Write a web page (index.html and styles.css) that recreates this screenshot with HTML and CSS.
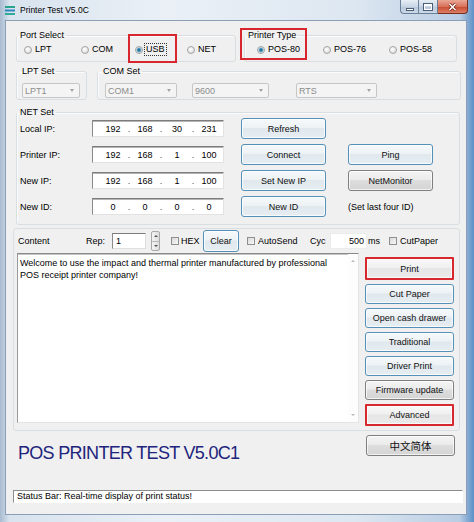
FILE: index.html
```html
<!DOCTYPE html>
<html lang="en">

<head>
    <meta charset="UTF-8">
    <meta name="viewport" content="width=device-width, initial-scale=1.0">
    <title>Printer Test V5.0C</title>
    <link rel="stylesheet" href="styles.css">
</head>

<body>
    <div class="window">
        <div class="titlebar">
            <svg class="app-icon" width="10" height="9" viewBox="0 0 10 9">
                <rect x="0" y="0" width="10" height="2" fill="#2aa38c" />
                <rect x="0" y="3.5" width="10" height="2" fill="#2b86c2" />
                <rect x="0" y="7" width="10" height="2" fill="#33a99a" />
            </svg>
            <span class="title">Printer Test V5.0C</span>
            <div class="caption-buttons">
                <span class="cap-btn cap-min"><span class="min-glyph"></span></span>
                <span class="cap-btn cap-max"><span class="max-glyph"></span></span>
                <span class="cap-btn cap-close">
                    <svg width="9" height="8" viewBox="0 0 9 8">
                        <path d="M1.5 1 L7.5 7 M7.5 1 L1.5 7" stroke="#6b1d10" stroke-width="3" />
                        <path d="M1.5 1 L7.5 7 M7.5 1 L1.5 7" stroke="#ffffff" stroke-width="1.6" />
                    </svg>
                </span>
            </div>
        </div>

        <div class="client">
            <div class="top-row">
                <fieldset class="group port-group">
                    <legend>Port Select</legend>
                    <div class="radio-row port-radios">
                        <label class="opt"><span class="radio"></span>LPT</label>
                        <label class="opt"><span class="radio"></span>COM</label>
                        <label class="opt"><span class="radio checked"></span><span class="focus">USB</span><span class="mark usb-mark"></span></label>
                        <label class="opt"><span class="radio"></span>NET</label>
                    </div>
                </fieldset>
                <fieldset class="group type-group">
                    <legend>Printer Type<span class="mark type-mark"></span></legend>
                    <div class="radio-row type-radios">
                        <label class="opt"><span class="radio checked"></span>POS-80</label>
                        <label class="opt"><span class="radio"></span>POS-76</label>
                        <label class="opt"><span class="radio"></span>POS-58</label>
                    </div>
                </fieldset>
            </div>

            <div class="set-row">
                <fieldset class="group lpt-group">
                    <legend>LPT Set</legend>
                    <div class="combo-row lpt-combos">
                        <span class="combo combo-lpt">LPT1<i class="arrow"></i></span>
                    </div>
                </fieldset>
                <fieldset class="group com-group">
                    <legend>COM Set</legend>
                    <div class="combo-row com-combos">
                        <span class="combo combo-port">COM1<i class="arrow"></i></span>
                        <span class="combo combo-baud">9600<i class="arrow"></i></span>
                        <span class="combo combo-flow">RTS<i class="arrow"></i></span>
                    </div>
                </fieldset>
            </div>

            <fieldset class="group net-group">
                <legend>NET Set</legend>
                <div class="net-grid">
                    <span>Local IP:</span>
                    <div class="ipbox"><span>192</span><i>.</i><span>168</span><i>.</i><span>30</span><i>.</i><span>231</span></div>
                    <button class="btn net-btn">Refresh</button>
                    <span></span>

                    <span>Printer IP:</span>
                    <div class="ipbox"><span>192</span><i>.</i><span>168</span><i>.</i><span>1</span><i>.</i><span>100</span></div>
                    <button class="btn net-btn">Connect</button>
                    <button class="btn net-btn">Ping</button>

                    <span>New IP:</span>
                    <div class="ipbox"><span>192</span><i>.</i><span>168</span><i>.</i><span>1</span><i>.</i><span>100</span></div>
                    <button class="btn net-btn">Set New IP</button>
                    <button class="btn gray net-btn">NetMonitor</button>

                    <span>New ID:</span>
                    <div class="ipbox"><span>0</span><i>.</i><span>0</span><i>.</i><span>0</span><i>.</i><span>0</span></div>
                    <button class="btn net-btn">New ID</button>
                    <span>(Set last four ID)</span>
                </div>
            </fieldset>

            <div class="content-group">
                <div class="content-bar">
                    <span class="content-label">Content</span>
                    <span class="rep-label">Rep:</span>
                    <span class="edit rep-edit">1</span>
                    <span class="spin"><i class="spin-up"></i><i class="spin-down"></i></span>
                    <label class="check hex-check"><span class="box"></span>HEX</label>
                    <button class="btn clear-btn">Clear</button>
                    <label class="check auto-check"><span class="box"></span>AutoSend</label>
                    <span class="cyc-label">Cyc</span>
                    <span class="edit cyc-edit">500</span>
                    <span class="ms-label">ms</span>
                    <label class="check"><span class="box"></span>CutPaper</label>
                </div>
                <div class="content-main">
                    <div class="memo">
                        <div class="memo-text">Welcome to use the impact and thermal printer manufactured by professional<br>POS receipt printer company!</div>
                        <div class="memo-scroll"><i class="scroll-up"></i><i class="scroll-down"></i></div>
                    </div>
                    <div class="side-buttons">
                        <button class="btn marked print-btn">Print</button>
                        <button class="btn">Cut Paper</button>
                        <button class="btn">Open cash drawer</button>
                        <button class="btn">Traditional</button>
                        <button class="btn">Driver Print</button>
                        <button class="btn gray">Firmware update</button>
                        <button class="btn marked advanced-btn">Advanced</button>
                    </div>
                </div>
            </div>

            <div class="bottom-row">
                <div class="big-title">POS PRINTER TEST V5.0C1</div>
                <button class="btn gray lang-btn">中文简体</button>
            </div>

            <div class="statusbar">Status Bar: Real-time display of print status!</div>
        </div>
    </div>
</body>

</html>
```

FILE: styles.css
```css
* {
    box-sizing: border-box;
}

body {
    margin: 0;
    width: 474px;
    height: 522px;
    overflow: hidden;
    font-family: 'Liberation Sans', Arial, sans-serif;
    font-size: 9px;
    color: #111;
}

.window {
    width: 474px;
    height: 522px;
    background: linear-gradient(to right, #a9bbd0 0, #d8e3ee 2%, #eaf0f6 35%, #dde7f1 75%, #b9cde3 97%, #5d90c6 100%);
}

/* title bar */

.titlebar {
    height: 20px;
    display: flex;
    align-items: center;
}

.app-icon {
    margin-left: 5px;
    margin-top: 1px;
}

.title {
    margin-left: 5px;
    font-size: 8.5px;
    color: #000;
}

.caption-buttons {
    display: flex;
    align-self: flex-start;
    margin-left: auto;
    margin-right: 6px;
}

.cap-btn {
    height: 14px;
    display: flex;
    align-items: center;
    justify-content: center;
    border: 1px solid #6a7f98;
    border-top: none;
    background: linear-gradient(#e6edf5, #c9d6e5 50%, #b6c6d9 51%, #ccd9e8);
}

.cap-min {
    width: 19px;
    border-radius: 0 0 0 4px;
}

.cap-max {
    width: 19px;
    border-left: none;
}

.cap-close {
    width: 30px;
    border-left: none;
    border-color: #7a2e22;
    border-radius: 0 0 4px 0;
    background: linear-gradient(#eaa795, #d8725c 50%, #c84a30 51%, #dc8064);
}

.min-glyph {
    width: 8px;
    height: 3px;
    margin-top: 5px;
    background: #fff;
    border: 1px solid #4d5f75;
}

.max-glyph {
    width: 8px;
    height: 6px;
    border: 1px solid #fff;
    border-top-width: 2px;
    outline: 1px solid #4d5f75;
}

/* client area */

.client {
    margin-left: 5px;
    width: 462px;
    height: 495px;
    border: 1px solid #8a9fb7;
    background: #f0f0f0;
}

.group {
    margin: 0;
    padding: 0;
    min-width: 0;
    border: 1px solid #d9dee2;
    border-radius: 3px;
    box-shadow: inset 1px 1px 0 #fbfbfb;
}

.group legend {
    padding: 0 2px 0 3px;
    font-size: 9px;
    line-height: 11px;
    color: #000;
}

.top-row {
    display: flex;
    margin: 9px 0 0 10px;
}

.port-group {
    width: 220px;
}

.type-group {
    width: 213px;
    margin-left: 8px;
}

.type-group legend {
    position: relative;
}

.radio-row {
    display: grid;
    height: 11px;
    margin: 3px 0 6px;
    align-items: center;
}

.port-radios {
    grid-template-columns: 57px 54px 52px auto;
    padding-left: 7px;
}

.type-radios {
    grid-template-columns: 66px 66px auto;
    padding-left: 12px;
}

.opt {
    position: relative;
    display: flex;
    align-items: center;
    gap: 3px;
    line-height: 11px;
    color: #000;
}

.radio {
    flex: none;
    width: 8px;
    height: 8px;
    border-radius: 50%;
    border: 1px solid #a3a3a3;
    background: radial-gradient(circle at 40% 35%, #ffffff 0, #e8e8e8 55%, #d0d0d0 100%);
}

.radio.checked {
    background: radial-gradient(circle, #1c5b82 0, #3c8bb5 1.4px, #9cc5dc 2.3px, #ececec 3px, #d2d2d2 100%);
}

.focus {
    outline: 1px dotted #333;
    padding: 0 1px;
    margin-left: -1px;
}

.mark {
    position: absolute;
    border: 2px solid #d8262e;
    pointer-events: none;
}

.usb-mark {
    left: -7px;
    top: -10px;
    width: 49px;
    height: 29px;
}

.type-mark {
    left: -5px;
    top: -2px;
    width: 67px;
    height: 32px;
}

/* LPT / COM */

.set-row {
    display: flex;
    margin: 4px 0 0 10px;
}

.set-row legend {
    padding-left: 5px;
}

.lpt-group {
    width: 71px;
}

.com-group {
    width: 364px;
    margin-left: 10px;
}

.combo-row {
    display: flex;
    padding: 6px 0 1px;
}

.lpt-combos {
    padding-left: 5px;
}

.com-combos {
    padding-left: 7px;
}

.combo {
    display: flex;
    align-items: center;
    height: 15px;
    padding-left: 2px;
    border: 1px solid #c6c6c6;
    border-radius: 2px;
    background: #f4f4f4;
    color: #8d8d8d;
}

.combo .arrow {
    margin-left: auto;
    margin-right: 5px;
    border-left: 2.5px solid transparent;
    border-right: 2.5px solid transparent;
    border-top: 3px solid #a3a3a3;
}

.combo-lpt {
    width: 58px;
}

.combo-port {
    width: 72px;
}

.combo-baud {
    width: 77px;
    margin-left: 15px;
}

.combo-flow {
    width: 81px;
    margin-left: 27px;
}

/* NET */

.net-group {
    width: 444px;
    margin: 7px 0 0 10px;
}

.net-grid {
    display: grid;
    grid-template-columns: 72px 149px 107px 85px;
    grid-auto-rows: 21px;
    row-gap: 5px;
    align-items: center;
    padding: 0 0 7px 3px;
    color: #000;
}

.ipbox {
    display: flex;
    align-items: center;
    width: 132px;
    height: 17px;
    padding-left: 6px;
    border: 1px solid;
    border-color: #7c7c7c #e2e2e2 #e2e2e2 #8a8a8a;
    box-shadow: inset 0 1px 0 #b4b4b4;
    background: #fff;
}

.ipbox span {
    flex: 1;
    text-align: center;
}

.ipbox i {
    width: 4px;
    font-style: normal;
    text-align: center;
    color: #444;
}

.btn {
    font: inherit;
    color: #111;
    padding: 0;
    height: 21px;
    border: 1px solid #5590b8;
    border-radius: 3px;
    background: linear-gradient(#f6f9fb, #edf2f5 45%, #e0e8ee 50%, #e7eef2);
    box-shadow: inset 0 0 0 1px rgba(255, 255, 255, 0.7);
}

.btn.gray {
    border-color: #7f7f7f;
    background: linear-gradient(#f4f4f4, #ebebeb 45%, #dddddd 50%, #d4d4d4);
}

.btn.marked {
    border: 2px solid #d6282f;
    border-radius: 1px;
    background: linear-gradient(#f8f8f8, #f0f0f0 45%, #e6e6e6 50%, #ebebeb);
}

.net-btn {
    width: 85px;
}

/* content */

.content-group {
    width: 447px;
    margin: 3px 0 0 7px;
    border: 1px solid #d9dee2;
    border-radius: 3px;
}

.content-bar {
    display: flex;
    align-items: center;
    height: 24px;
    padding-left: 4px;
    color: #000;
}

.content-label {
    width: 68px;
}

.rep-label {
    width: 26px;
}

.cyc-label {
    width: 20px;
}

.ms-label {
    width: 21px;
}

.edit {
    height: 16px;
    line-height: 14px;
    background: #fff;
}

.rep-edit {
    width: 34px;
    padding-left: 3px;
    border: 1px solid;
    border-color: #7c7c7c #dedede #dedede #8a8a8a;
}

.cyc-edit {
    width: 37px;
    margin-right: 1px;
    padding-right: 2px;
    text-align: right;
    border: 1px solid #ececec;
}

.spin {
    display: flex;
    flex-direction: column;
    width: 9px;
    height: 20px;
    margin: 0 11px 0 5px;
    border: 1px solid #a9a9a9;
    border-radius: 2px;
    background: linear-gradient(to right, #f4f4f4, #dedede);
}

.spin i {
    flex: 1;
    display: flex;
    align-items: center;
    justify-content: center;
}

.spin i::after {
    content: '';
    border-left: 2px solid transparent;
    border-right: 2px solid transparent;
}

.spin-up {
    border-bottom: 1px solid #b9b9b9;
}

.spin-up::after {
    border-bottom: 2px solid #555;
}

.spin-down::after {
    border-top: 2px solid #555;
}

.check {
    display: flex;
    align-items: center;
    gap: 3px;
}

.check .box {
    width: 8px;
    height: 8px;
    border: 1px solid #8f8f8f;
    background: linear-gradient(135deg, #d9d9d9, #f8f8f8);
}

.hex-check {
    width: 32px;
    gap: 2px;
}

.auto-check {
    width: 63px;
}

.clear-btn {
    width: 36px;
    height: 22px;
    margin-right: 8px;
}

.content-main {
    display: flex;
    gap: 6px;
    padding: 0 4px 4px 3px;
}

.memo {
    display: flex;
    width: 342px;
    height: 170px;
    border: 1px solid;
    border-color: #8a8a8a #e4e4e4 #e4e4e4 #9a9a9a;
    box-shadow: inset 0 1px 0 #c4c4c4;
    background: #fff;
}

.memo-text {
    flex: 1;
    padding: 3px 0 0 2px;
    line-height: 12px;
    white-space: nowrap;
    color: #000;
}

.memo-scroll {
    width: 10px;
    display: flex;
    flex-direction: column;
    justify-content: space-between;
    align-items: center;
    padding: 6px 0 6px;
    background: #fdfdfd;
}

.memo-scroll i {
    border-left: 2px solid transparent;
    border-right: 2px solid transparent;
}

.scroll-up {
    border-bottom: 2px solid #b8b8b8;
}

.scroll-down {
    border-top: 2px solid #b8b8b8;
}

.side-buttons {
    display: flex;
    flex-direction: column;
    gap: 4px;
    width: 89px;
    margin-top: 4px;
}

.side-buttons .btn {
    height: 20px;
}

.side-buttons .print-btn {
    height: 23px;
}

.side-buttons .advanced-btn {
    height: 22px;
}

.bottom-row {
    display: flex;
    align-items: flex-start;
    margin-top: 4px;
    padding-left: 12px;
}

.big-title {
    margin-top: 7px;
    font-size: 18px;
    line-height: 22px;
    letter-spacing: -0.7px;
    color: #20247c;
}

.lang-btn {
    width: 89px;
    margin: 0 11px 0 auto;
    font-family: 'Noto Sans CJK SC', sans-serif;
    font-size: 10.5px;
}

.statusbar {
    width: 450px;
    height: 13px;
    margin: 26px 0 0 7px;
    padding-left: 3px;
    line-height: 11px;
    border: 1px solid;
    border-color: #8c8c8c #ffffff #ffffff #8c8c8c;
    background: #fff;
    color: #000;
}
```
